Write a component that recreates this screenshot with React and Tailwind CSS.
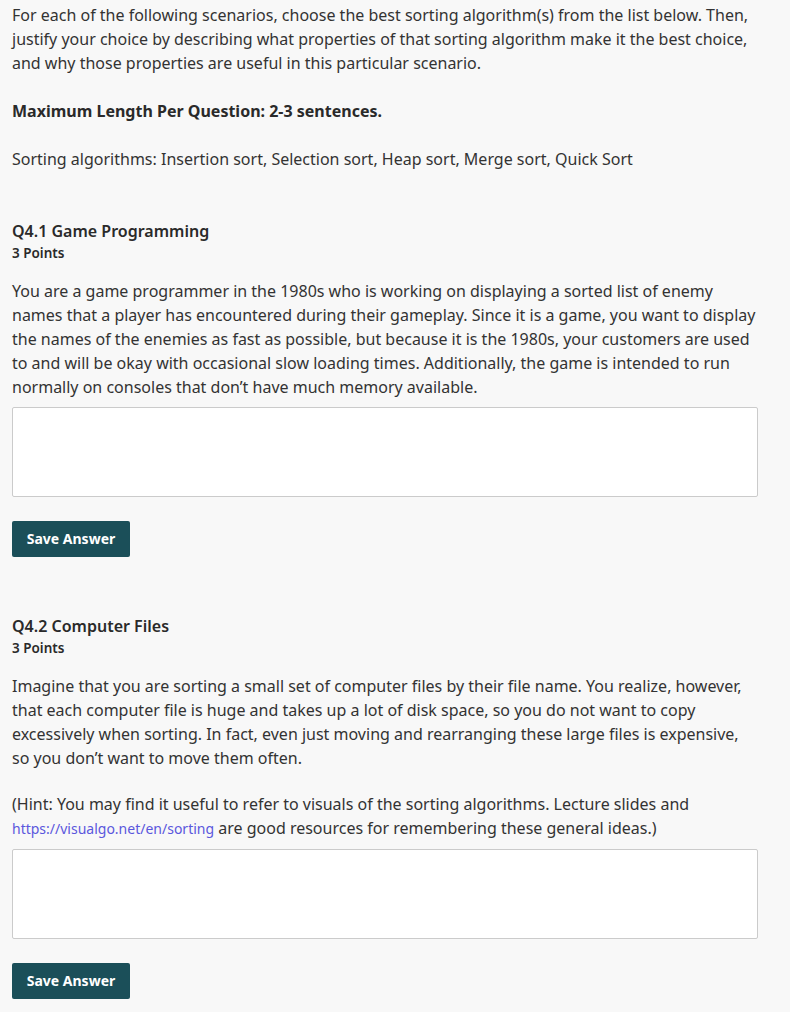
const questions = [
  {
    id: 'Q4.1',
    title: 'Game Programming',
    points: '3 Points',
    body: [
      'You are a game programmer in the 1980s who is working on displaying a sorted list of enemy names that a player has encountered during their gameplay. Since it is a game, you want to display the names of the enemies as fast as possible, but because it is the 1980s, your customers are used to and will be okay with occasional slow loading times. Additionally, the game is intended to run normally on consoles that don\u2019t have much memory available.',
    ],
    hint: false,
  },
  {
    id: 'Q4.2',
    title: 'Computer Files',
    points: '3 Points',
    body: [
      'Imagine that you are sorting a small set of computer files by their file name. You realize, however, that each computer file is huge and takes up a lot of disk space, so you do not want to copy excessively when sorting. In fact, even just moving and rearranging these large files is expensive, so you don\u2019t want to move them often.',
    ],
    hint: true,
  },
];

function Question({ q, first }) {
  return (
    <section className={first ? 'mt-[48px]' : 'mt-[57px]'}>
      <h3 className="text-[16px] leading-[24px] font-semibold text-[#2a2a2a]">
        {q.id} {q.title}
      </h3>
      <div className="text-[13.5px] leading-[20px] font-semibold text-[#2a2a2a]">{q.points}</div>
      <p className="mt-[16px]">{q.body[0]}</p>
      {q.hint && (
        <p className="mt-[22px]">
          (Hint: You may find it useful to refer to visuals of the sorting algorithms. Lecture slides and{' '}
          <a href="#" className="text-[14px] text-[#5b57dd]">
            https://visualgo.net/en/sorting
          </a>{' '}
          are good resources for remembering these general ideas.)
        </p>
      )}
      <textarea className="mt-2 block w-full h-[90px] bg-white border border-[#cbcbcb] rounded-[2px] resize-none outline-none" />
      <button className="mt-6 h-9 w-[118px] rounded-[2px] bg-[#1b4f59] text-white text-[14px] font-bold">
        Save Answer
      </button>
    </section>
  );
}

export default function App() {
  return (
    <div
      className="min-h-screen bg-[#f8f8f8] text-[#333] text-[16px] leading-[24px]"
      style={{ fontFamily: '"Noto Sans", sans-serif' }}
    >
      <div className="w-[746px] ml-3 pt-[3px] pb-4">
        <p>
          For each of the following scenarios, choose the best sorting algorithm(s) from the list below. Then,
          justify your choice by describing what properties of that sorting algorithm make it the best choice,
          and why those properties are useful in this particular scenario.
        </p>
        <p className="mt-6 font-bold text-[#2a2a2a]">Maximum Length Per Question: 2-3 sentences.</p>
        <p className="mt-6">Sorting algorithms: Insertion sort, Selection sort, Heap sort, Merge sort, Quick Sort</p>
        {questions.map((q, i) => (
          <Question key={q.id} q={q} first={i === 0} />
        ))}
      </div>
    </div>
  );
}
